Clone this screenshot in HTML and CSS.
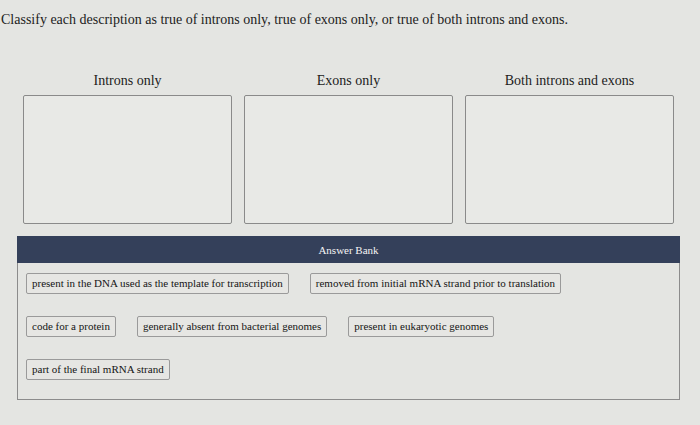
FILE: index.html
```html
<!DOCTYPE html>
<html lang="en">
<head>
    <meta charset="UTF-8">
    <title>Classify introns and exons</title>
    <link rel="stylesheet" href="styles.css">
</head>
<body>
    <p class="prompt">Classify each description as true of introns only, true of exons only, or true of both introns and exons.</p>

    <div class="bins">
        <div class="bin">
            <div class="bin-title">Introns only</div>
            <div class="drop"></div>
        </div>
        <div class="bin">
            <div class="bin-title">Exons only</div>
            <div class="drop"></div>
        </div>
        <div class="bin">
            <div class="bin-title">Both introns and exons</div>
            <div class="drop"></div>
        </div>
    </div>

    <div class="bank">
        <div class="bank-head">Answer Bank</div>
        <div class="bank-body">
            <div class="row">
                <div class="chip">present in the DNA used as the template for transcription</div>
                <div class="chip">removed from initial mRNA strand prior to translation</div>
            </div>
            <div class="row">
                <div class="chip">code for a protein</div>
                <div class="chip">generally absent from bacterial genomes</div>
                <div class="chip">present in eukaryotic genomes</div>
            </div>
            <div class="row">
                <div class="chip">part of the final mRNA strand</div>
            </div>
        </div>
    </div>
</body>
</html>
```

FILE: styles.css
```css
body {
    margin: 0;
    background: #e4e5e2;
    font-family: "Liberation Serif", "Times New Roman", serif;
    color: #1c1c1c;
    width: 700px;
    height: 425px;
    overflow: hidden;
}
.prompt {
    margin: 0;
    padding: 11px 0 0 1px;
    font-size: 14px;
    line-height: 18px;
}
.bins {
    display: grid;
    grid-template-columns: repeat(3, 209px);
    gap: 12px;
    margin: 43px 0 0 23px;
}
.bin-title {
    text-align: center;
    font-size: 14px;
    line-height: 18px;
    margin-bottom: 5px;
}
.drop {
    height: 127px;
    border: 1px solid #8a8a8a;
    border-radius: 2px;
    background: #e8e9e6;
}
.bank {
    margin: 12px 0 0 17px;
    width: 663px;
}
.bank-head {
    background: #34405a;
    color: #f4f4f4;
    text-align: center;
    font-size: 11px;
    height: 27px;
    line-height: 29px;
}
.bank-body {
    border: 1px solid #8c8c8c;
    border-top: none;
    padding: 10px 8px 19px;
    display: flex;
    flex-direction: column;
    gap: 22px;
}
.row {
    display: flex;
    gap: 21px;
}
.chip {
    font-size: 11px;
    line-height: 19px;
    padding: 0 5px;
    border: 1px solid #9a9a9a;
    border-radius: 2px;
    background: #e6e6e3;
    color: #151515;
}
```
